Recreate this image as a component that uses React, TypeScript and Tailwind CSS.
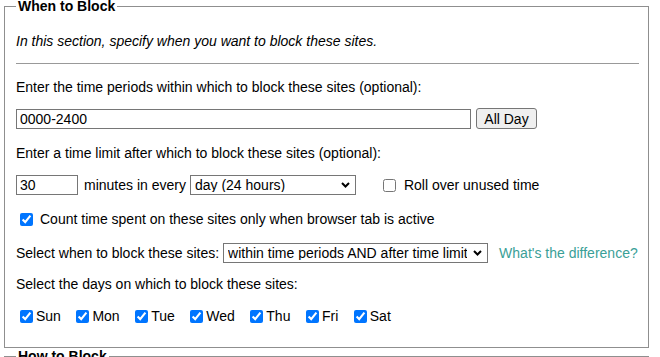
import React from 'react'

const font = { fontFamily: '"Liberation Sans", Arial, sans-serif' }

const Chevron = () => (
  <svg className="pointer-events-none absolute right-[6px] top-1/2 -translate-y-1/2" width="9" height="6" viewBox="0 0 9 6">
    <path d="M1 1l3.5 3.5L8 1" fill="none" stroke="#000" strokeWidth="2" />
  </svg>
)

const Select = ({ value, width }: { value: string; width: string }) => (
  <div className={`relative shrink-0 ${width}`}>
    <select
      defaultValue={value}
      className="h-[20px] w-full appearance-none border border-[#767676] bg-white pl-[4px] pr-[20px] text-[14px] leading-none text-black outline-none"
    >
      <option>{value}</option>
    </select>
    <Chevron />
  </div>
)

const Check = ({ checked }: { checked?: boolean }) => (
  <input type="checkbox" defaultChecked={checked} className="ml-[4px] mr-[3px] h-[13px] w-[13px] shrink-0 accent-[#0075ff]" />
)

const days = ['Sun', 'Mon', 'Tue', 'Wed', 'Thu', 'Fri', 'Sat']

export default function App() {
  return (
    <div className="min-h-screen whitespace-nowrap bg-white text-[14px] leading-4 text-black" style={font}>
      {/* When to Block */}
      <fieldset className="mx-[4px] w-[645px] border border-[#8f8f8f] pb-[23px] pl-[11px] pr-[9px]">
        <legend className="px-[2px] text-[14px] font-bold leading-[12px]">When to Block</legend>

        <p className="mt-[21px] italic">In this section, specify when you want to block these sites.</p>
        <hr className="mt-[14px] border-t border-[#999]" />

        <p className="mt-[15px]">Enter the time periods within which to block these sites (optional):</p>
        <div className="mt-[13px] flex h-[21px] items-center">
          <input
            defaultValue="0000-2400"
            className="h-[20px] w-[455px] border border-[#767676] px-[3px] text-[14px] outline-none"
          />
          <button className="ml-[5px] h-[21px] w-[61px] rounded-[3px] border border-[#767676] bg-[#efefef] text-[14px]">
            All Day
          </button>
        </div>

        <p className="mt-[16px]">Enter a time limit after which to block these sites (optional):</p>
        <div className="mt-[14px] flex h-[20px] items-center">
          <input
            defaultValue="30"
            className="h-[20px] w-[62px] border border-[#767676] px-[3px] text-[14px] outline-none"
          />
          <span className="ml-[6px] mr-[4px]">minutes in every</span>
          <Select value="day (24 hours)" width="w-[166px]" />
          <span className="ml-[23px] flex items-center">
            <Check />
            <span className="ml-[5px]">Roll over unused time</span>
          </span>
        </div>

        <label className="mt-[16px] flex h-[16px] items-center">
          <Check checked />
          <span className="ml-[4px]">Count time spent on these sites only when browser tab is active</span>
        </label>

        <div className="mt-[15px] flex h-[21px] items-center">
          <span className="mr-[4px] shrink-0">Select when to block these sites:</span>
          <Select value="within time periods AND after time limit" width="w-[265px]" />
          <a href="#" className="ml-[11px] shrink-0 text-[#3aa097]">What's the difference?</a>
        </div>

        <p className="mt-[13px]">Select the days on which to block these sites:</p>
        <div className="mt-[16px] flex h-[16px] items-center gap-[11.5px]">
          {days.map((d) => (
            <label key={d} className="flex items-center">
              <Check checked />
              <span>{d}</span>
            </label>
          ))}
        </div>
      </fieldset>

      {/* How to Block */}
      <fieldset className="mx-[4px] mt-[2px] w-[645px] border border-[#8f8f8f] pl-[11px] pr-[9px] pb-[20px]">
        <legend className="px-[2px] text-[14px] font-bold leading-[12px]">How to Block</legend>
      </fieldset>
    </div>
  )
}
